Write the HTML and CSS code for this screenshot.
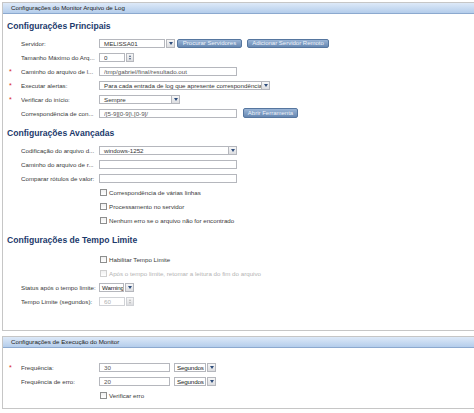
FILE: index.html
```html
<!DOCTYPE html>
<html lang="pt">
<head>
<meta charset="utf-8">
<title>Configurações do Monitor Arquivo de Log</title>
<link rel="stylesheet" href="styles.css">
</head>
<body>
<div class="panel panel-main">
  <div class="panel-head">Configurações do Monitor Arquivo de Log</div>
  <div class="panel-body body-main">
    <h2 class="section first">Configurações Principais</h2>
    <div class="rows">
      <div class="row">
        <span class="req"></span><label class="lbl">Servidor:</label>
        <div class="field">
          <div class="sel w-server"><span class="sel-val">MELISSA01</span><span class="sel-btn sep"><i class="tri"></i></span></div>
          <button class="btn w-proc">Procurar Servidores</button>
          <button class="btn w-add">Adicionar Servidor Remoto</button>
        </div>
      </div>
      <div class="row">
        <span class="req"></span><label class="lbl">Tamanho Máximo do Arq...</label>
        <div class="field">
          <div class="spin"><input class="spin-val" type="text" value="0"><span class="spin-btn"><i class="up"></i><i class="dn"></i></span></div>
        </div>
      </div>
      <div class="row">
        <span class="req">*</span><label class="lbl">Caminho do arquivo de l...</label>
        <div class="field"><input class="inp w-138" type="text" value="/tmp/gabriel/final/resultado.out"></div>
      </div>
      <div class="row">
        <span class="req">*</span><label class="lbl">Executar alertas:</label>
        <div class="field">
          <div class="sel w-exec"><span class="sel-val">Para cada entrada de log que apresente correspondência</span><span class="sel-btn"><i class="tri"></i></span></div>
        </div>
      </div>
      <div class="row">
        <span class="req">*</span><label class="lbl">Verificar do início:</label>
        <div class="field">
          <div class="sel w-verif"><span class="sel-val">Sempre</span><span class="sel-btn"><i class="tri"></i></span></div>
        </div>
      </div>
      <div class="row">
        <span class="req"></span><label class="lbl">Correspondência de con...</label>
        <div class="field">
          <input class="inp w-138" type="text" value="/[5-9][0-9]\.[0-9]/">
          <button class="btn w-abrir">Abrir Ferramenta</button>
        </div>
      </div>
    </div>

    <h2 class="section">Configurações Avançadas</h2>
    <div class="rows">
      <div class="row">
        <span class="req"></span><label class="lbl">Codificação do arquivo d...</label>
        <div class="field">
          <div class="sel w-138"><span class="sel-val">windows-1252</span><span class="sel-btn"><i class="tri"></i></span></div>
        </div>
      </div>
      <div class="row">
        <span class="req"></span><label class="lbl">Caminho do arquivo de r...</label>
        <div class="field"><input class="inp w-138" type="text" value=""></div>
      </div>
      <div class="row">
        <span class="req"></span><label class="lbl">Comparar rótulos de valor:</label>
        <div class="field"><input class="inp w-138" type="text" value=""></div>
      </div>
      <div class="row">
        <span class="req"></span><span class="lbl"></span>
        <label class="field chk"><input type="checkbox" class="cb">Correspondência de várias linhas</label>
      </div>
      <div class="row">
        <span class="req"></span><span class="lbl"></span>
        <label class="field chk"><input type="checkbox" class="cb">Processamento no servidor</label>
      </div>
      <div class="row">
        <span class="req"></span><span class="lbl"></span>
        <label class="field chk"><input type="checkbox" class="cb">Nenhum erro se o arquivo não for encontrado</label>
      </div>
    </div>

    <h2 class="section last">Configurações de Tempo Limite</h2>
    <div class="rows">
      <div class="row">
        <span class="req"></span><span class="lbl"></span>
        <label class="field chk"><input type="checkbox" class="cb">Habilitar Tempo Limite</label>
      </div>
      <div class="row">
        <span class="req"></span><span class="lbl"></span>
        <label class="field chk disabled"><input type="checkbox" class="cb" disabled>Após o tempo limite, retomar a leitura do fim do arquivo</label>
      </div>
      <div class="row">
        <span class="req"></span><label class="lbl">Status após o tempo limite:</label>
        <div class="field">
          <div class="sel w-warn"><span class="sel-val tight">Warning</span><span class="sel-btn sep"><i class="tri"></i></span></div>
        </div>
      </div>
      <div class="row">
        <span class="req"></span><label class="lbl">Tempo Limite (segundos):</label>
        <div class="field">
          <div class="spin disabled"><input class="spin-val" type="text" value="60" disabled><span class="spin-btn"><i class="up"></i><i class="dn"></i></span></div>
        </div>
      </div>
    </div>
  </div>
</div>

<div class="panel panel-exec">
  <div class="panel-head">Configurações de Execução do Monitor</div>
  <div class="panel-body body-exec">
    <div class="rows">
      <div class="row">
        <span class="req">*</span><label class="lbl">Frequência:</label>
        <div class="field">
          <input class="inp w-freq" type="text" value="30">
          <div class="sel w-seg"><span class="sel-val tight">Segundos</span><span class="sel-btn sep"><i class="tri"></i></span></div>
        </div>
      </div>
      <div class="row">
        <span class="req"></span><label class="lbl">Frequência de erro:</label>
        <div class="field">
          <input class="inp w-freq" type="text" value="20">
          <div class="sel w-seg"><span class="sel-val tight">Segundos</span><span class="sel-btn sep"><i class="tri"></i></span></div>
        </div>
      </div>
      <div class="row">
        <span class="req"></span><span class="lbl"></span>
        <label class="field chk"><input type="checkbox" class="cb">Verificar erro</label>
      </div>
    </div>
  </div>
</div>
</body>
</html>
```

FILE: styles.css
```css
* { box-sizing: border-box; }

html, body {
  margin: 0;
  padding: 0;
  background: #ffffff;
}

body {
  width: 474px;
  height: 413px;
  overflow: hidden;
  font-family: "Liberation Sans", Arial, sans-serif;
  font-size: 6.2px;
  color: #3a3a3a;
}

.panel {
  margin-left: 2px;
  border: 1px solid #c6c6c6;
  border-right: none;
}

.panel-main { margin-top: 2px; }
.panel-exec { margin-top: 5px; }

.panel-head {
  height: 11px;
  padding-left: 8px;
  line-height: 10px;
  font-size: 6.2px;
  color: #222222;
  background: linear-gradient(#dde9f8, #b4cdeb);
  border-bottom: 1px solid #8ca9cf;
}

.body-main { padding-bottom: 22px; }
.body-exec { padding-top: 12px; padding-bottom: 6px; }

.section {
  margin: 8px 0 5px 4px;
  height: 10px;
  line-height: 10px;
  font-size: 8.6px;
  font-weight: bold;
  color: #1d3a6c;
}

.section.first { margin-top: 7px; }
.section.last { margin-bottom: 7px; }

.rows {
  display: flex;
  flex-direction: column;
}

.row {
  display: grid;
  grid-template-columns: 18px 78px auto;
  align-items: center;
  height: 14px;
}

.req {
  padding-left: 6px;
  color: #d6261e;
  font-size: 7px;
  line-height: 7px;
}

.lbl {
  white-space: nowrap;
  overflow: hidden;
  color: #3a3a3a;
}

.field {
  display: flex;
  align-items: center;
  gap: 4px;
}

/* text inputs */
.inp {
  height: 9px;
  margin: 0;
  padding: 0 0 0 4px;
  border: 1px solid #b5b7bd;
  background: #ffffff;
  font-family: inherit;
  font-size: 6.2px;
  color: #555555;
  outline: none;
}

.w-138 { width: 138px; }
.w-freq { width: 71px; }

/* select-like boxes */
.sel {
  display: flex;
  height: 9px;
}

.sel-val {
  flex: 1;
  min-width: 0;
  padding-left: 4px;
  line-height: 7px;
  white-space: nowrap;
  overflow: hidden;
  border: 1px solid #b5b7bd;
  border-right: none;
  background: #ffffff;
  color: #333333;
}

.sel-val.tight {
  padding-left: 2px;
  letter-spacing: -0.15px;
  color: #222222;
}

.sel-btn {
  width: 9px;
  border: 1px solid #b5b7bd;
  background: linear-gradient(#f7f7f7, #dcdde0);
  display: flex;
  align-items: center;
  justify-content: center;
}

.sel-btn.sep { margin-left: 1px; }
.sel:has(.sep) .sel-val { border-right: 1px solid #b5b7bd; }

.tri {
  width: 0;
  height: 0;
  border-left: 2.5px solid transparent;
  border-right: 2.5px solid transparent;
  border-top: 3px solid #2f4e7c;
}

.w-server { width: 76px; }
.w-exec { width: 171px; }
.w-verif { width: 81px; }
.w-warn { width: 35px; }
.w-seg { width: 42px; }
.w-138.sel { width: 138px; }

/* spinners */
.spin {
  display: flex;
  height: 9px;
}

.spin-val {
  width: 26px;
  height: 9px;
  margin: 0;
  padding: 0 0 0 4px;
  border: 1px solid #b5b7bd;
  font-family: inherit;
  font-size: 6.2px;
  color: #333333;
  background: #ffffff;
  outline: none;
}

.spin-btn {
  width: 8px;
  margin-left: 1px;
  border: 1px solid #b5b7bd;
  background: linear-gradient(#f7f7f7, #dcdde0);
  display: flex;
  flex-direction: column;
  align-items: center;
  justify-content: center;
  gap: 1px;
}

.up, .dn {
  width: 0;
  height: 0;
  border-left: 1.5px solid transparent;
  border-right: 1.5px solid transparent;
}

.up { border-bottom: 2px solid #4a5f80; }
.dn { border-top: 2px solid #4a5f80; }

.spin.disabled .spin-val { color: #b0b0b0; border-color: #d0d2d6; }
.spin.disabled .spin-btn { border-color: #d0d2d6; }
.spin.disabled .up { border-bottom-color: #b8b8b8; }
.spin.disabled .dn { border-top-color: #b8b8b8; }

/* buttons */
.btn {
  height: 9px;
  margin: 0;
  padding: 0;
  border: 1px solid #56769f;
  border-radius: 2px;
  background: linear-gradient(#9ab5d6, #6788b2);
  color: #eef3fb;
  font-family: inherit;
  font-size: 6px;
  line-height: 7px;
  white-space: nowrap;
  text-align: center;
}

.w-server + .btn { margin-left: -2px; }
.w-proc { width: 65px; }
.w-add { width: 82px; margin-left: 1px; }
.w-abrir { width: 55px; height: 10px; margin-left: 2px; }

/* checkboxes */
.chk {
  gap: 2px;
  padding-left: 1px;
  color: #3a3a3a;
  white-space: nowrap;
}

.cb {
  appearance: none;
  -webkit-appearance: none;
  width: 7px;
  height: 7px;
  margin: 0;
  border: 1px solid #8e8f8f;
  background: linear-gradient(#f0f0f0, #ffffff);
}

.chk.disabled { color: #b4b4b4; }
.chk.disabled .cb { border-color: #cfcfcf; }
```
